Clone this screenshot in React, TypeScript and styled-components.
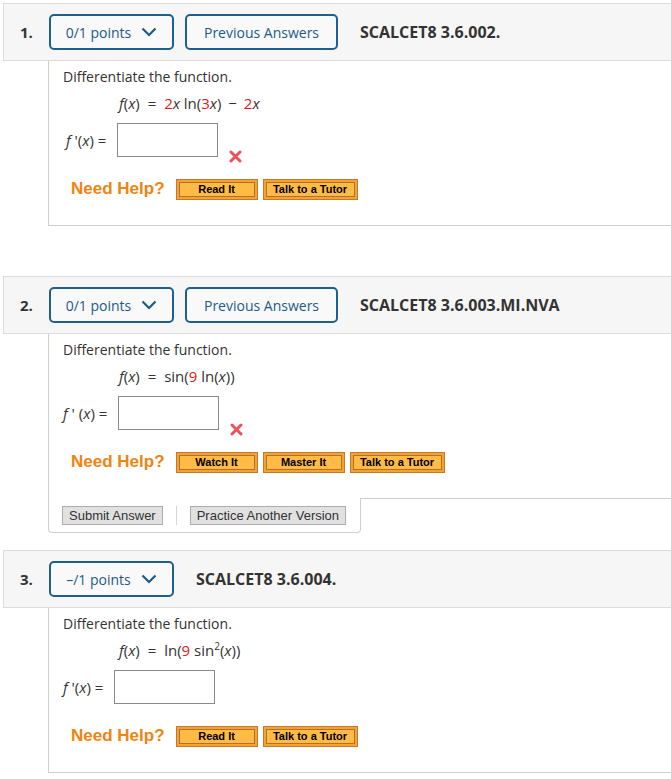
import React from "react";
import styled, { createGlobalStyle } from "styled-components";

const Global = createGlobalStyle`
  html, body { margin: 0; padding: 0; background: #fff; }
  body { font-family: "Open Sans", "Liberation Sans", sans-serif; color: #333; overflow-x: hidden; }
`;

const Page = styled.div`
  display: flex;
  flex-direction: column;
  padding: 3px 0 0 3px;
  width: 700px;
`;

const Question = styled.section<{ $gap: number }>`
  display: flex;
  flex-direction: column;
  margin-bottom: ${(p) => p.$gap}px;
`;

const Header = styled.div`
  display: flex;
  align-items: center;
  height: 56px;
  background: #f6f6f6;
  border: 1px solid #dcdcdc;
  border-right: none;
  padding-left: 16px;
`;

const Num = styled.div`
  width: 29px;
  font-size: 15px;
  font-weight: 700;
  color: #333;
`;

const OutlineBtn = styled.button<{ $w: number }>`
  display: flex;
  align-items: center;
  justify-content: center;
  gap: 10px;
  box-sizing: border-box;
  width: ${(p) => p.$w}px;
  height: 36px;
  margin-right: 11px;
  border: 2px solid #1d5f8e;
  border-radius: 5px;
  background: #f9f9f9;
  color: #1d5a88;
  font-family: "Open Sans", sans-serif;
  font-size: 14px;
  padding: 0;
`;

const Code = styled.div`
  margin-left: 11px;
  font-size: 16px;
  font-weight: 700;
  color: #333;
`;

const Body = styled.div<{ $closed: boolean }>`
  margin-left: 45px;
  border-left: 1px solid #cfcfcf;
  border-bottom: ${(p) => (p.$closed ? "1px solid #cfcfcf" : "none")};
  padding: 7px 0 24px 14px;
  display: flex;
  flex-direction: column;
`;

const Prompt = styled.div`
  font-size: 14px;
  line-height: 18px;
  color: #333;
`;

const Formula = styled.div`
  font-size: 15px;
  line-height: 18px;
  margin: 8px 0 0 56px;
  color: #333;
  white-space: pre;
  i { font-style: italic; }
  sup { font-size: 10px; line-height: 0; vertical-align: 6px; }
`;

const Op = styled.span<{ $m: number }>`
  margin: 0 ${(p) => p.$m}px;
`;

const Red = styled.span`
  color: #e8150f;
`;

const AnswerRow = styled.div<{ $indent: number }>`
  display: flex;
  align-items: flex-start;
  min-height: 43px;
  margin-top: 11px;
  padding-left: ${(p) => p.$indent}px;
`;

const Label = styled.span`
  font-size: 15px;
  line-height: 34px;
  margin-right: 11px;
  white-space: pre;
  i { font-style: italic; }
`;

const Input = styled.div`
  box-sizing: border-box;
  width: 101px;
  height: 34px;
  border: 1px solid #8a8a8a;
  background: #fff;
`;

const Wrong = styled.svg`
  margin: 27px 0 0 11px;
`;

const HelpRow = styled.div`
  display: flex;
  align-items: center;
  height: 24px;
  margin-top: 11px;
  padding-left: 8px;
`;

const HelpText = styled.span`
  font-family: "Liberation Sans", Arial, sans-serif;
  font-size: 17px;
  font-weight: 700;
  color: #ef840f;
  margin-right: 11px;
`;

const OrangeBtn = styled.button<{ $w: number }>`
  box-sizing: border-box;
  width: ${(p) => p.$w}px;
  height: 21px;
  margin-right: 5px;
  padding: 0;
  border: 1px solid #c47a2b;
  background: #ffbb45;
  box-shadow: inset 0 0 0 2px #f6a232, inset 0 0 0 3px #b3702a;
  font-family: "Liberation Sans", Arial, sans-serif;
  font-size: 11px;
  font-weight: 700;
  color: #000;
`;

const Footer = styled.div`
  display: flex;
  margin-left: 45px;
`;

const Tab = styled.div`
  display: flex;
  align-items: center;
  box-sizing: border-box;
  width: 313px;
  height: 35px;
  padding: 0 13px;
  border: 1px solid #cfcfcf;
  border-top: none;
  border-radius: 0 0 4px 4px;
`;

const Filler = styled.div`
  flex: 1;
  border-top: 1px solid #cfcfcf;
`;

const GrayBtn = styled.button`
  height: 19px;
  padding: 0 6px;
  border: 1px solid #adadad;
  background: #e1e1e1;
  font-family: "Liberation Sans", Arial, sans-serif;
  font-size: 13px;
  color: #333;
`;

const Sep = styled.div`
  width: 1px;
  height: 19px;
  background: #d6d6d6;
  margin: 0 13px;
`;

const Chevron = () => (
  <svg width="16" height="10" viewBox="0 0 16 10">
    <path d="M1.5 1.5 L8 8 L14.5 1.5" fill="none" stroke="#1d5a88" strokeWidth="2.2" />
  </svg>
);

const XMark = () => (
  <Wrong width="13" height="13" viewBox="0 0 13 13">
    <path d="M2 2 L11 11 M11 2 L2 11" stroke="#f0505c" strokeWidth="3" strokeLinecap="round" />
  </Wrong>
);

type Q = {
  n: number;
  points: string;
  prev: boolean;
  code: string;
  formula: React.ReactNode;
  label: React.ReactNode;
  indent: number;
  wrong: boolean;
  help: { t: string; w: number }[];
  footer: boolean;
  gap: number;
};

const questions: Q[] = [
  {
    n: 1,
    points: "0/1 points",
    prev: true,
    code: "SCALCET8 3.6.002.",
    formula: (
      <>
        <i>f</i>(<i>x</i>)<Op $m={4}> = </Op>
        <Red>2</Red>
        <i>x</i> ln(<Red>3</Red>
        <i>x</i>)<Op $m={3}> − </Op>
        <Red>2</Red>
        <i>x</i>
      </>
    ),
    label: (
      <>
        <i>f</i> '(<i>x</i>) =
      </>
    ),
    indent: 3,
    wrong: true,
    help: [
      { t: "Read It", w: 82 },
      { t: "Talk to a Tutor", w: 95 },
    ],
    footer: false,
    gap: 50,
  },
  {
    n: 2,
    points: "0/1 points",
    prev: true,
    code: "SCALCET8 3.6.003.MI.NVA",
    formula: (
      <>
        <i>f</i>(<i>x</i>)<Op $m={4}> = </Op>sin(<Red>9</Red> ln(<i>x</i>))
      </>
    ),
    label: (
      <>
        <i>f</i> ' (<i>x</i>) =
      </>
    ),
    indent: 0,
    wrong: true,
    help: [
      { t: "Watch It", w: 82 },
      { t: "Master It", w: 82 },
      { t: "Talk to a Tutor", w: 95 },
    ],
    footer: true,
    gap: 17,
  },
  {
    n: 3,
    points: "–/1 points",
    prev: false,
    code: "SCALCET8 3.6.004.",
    formula: (
      <>
        <i>f</i>(<i>x</i>)<Op $m={4}> = </Op>ln(<Red>9</Red> sin<sup>2</sup>(<i>x</i>))
      </>
    ),
    label: (
      <>
        <i>f</i> '(<i>x</i>) =
      </>
    ),
    indent: 0,
    wrong: false,
    help: [
      { t: "Read It", w: 82 },
      { t: "Talk to a Tutor", w: 95 },
    ],
    footer: false,
    gap: 0,
  },
];

export default function App() {
  return (
    <>
      <Global />
      <Page>
        {questions.map((q) => (
          <Question key={q.n} $gap={q.gap}>
            <Header>
              <Num>{q.n}.</Num>
              <OutlineBtn $w={125}>
                {q.points}
                <Chevron />
              </OutlineBtn>
              {q.prev && <OutlineBtn $w={153}>Previous Answers</OutlineBtn>}
              <Code>{q.code}</Code>
            </Header>
            <Body $closed={!q.footer}>
              <Prompt>Differentiate the function.</Prompt>
              <Formula>{q.formula}</Formula>
              <AnswerRow $indent={q.indent}>
                <Label>{q.label}</Label>
                <Input />
                {q.wrong && <XMark />}
              </AnswerRow>
              <HelpRow>
                <HelpText>Need Help?</HelpText>
                {q.help.map((h) => (
                  <OrangeBtn key={h.t} $w={h.w}>
                    {h.t}
                  </OrangeBtn>
                ))}
              </HelpRow>
            </Body>
            {q.footer && (
              <Footer>
                <Tab>
                  <GrayBtn>Submit Answer</GrayBtn>
                  <Sep />
                  <GrayBtn>Practice Another Version</GrayBtn>
                </Tab>
                <Filler />
              </Footer>
            )}
          </Question>
        ))}
      </Page>
    </>
  );
}
